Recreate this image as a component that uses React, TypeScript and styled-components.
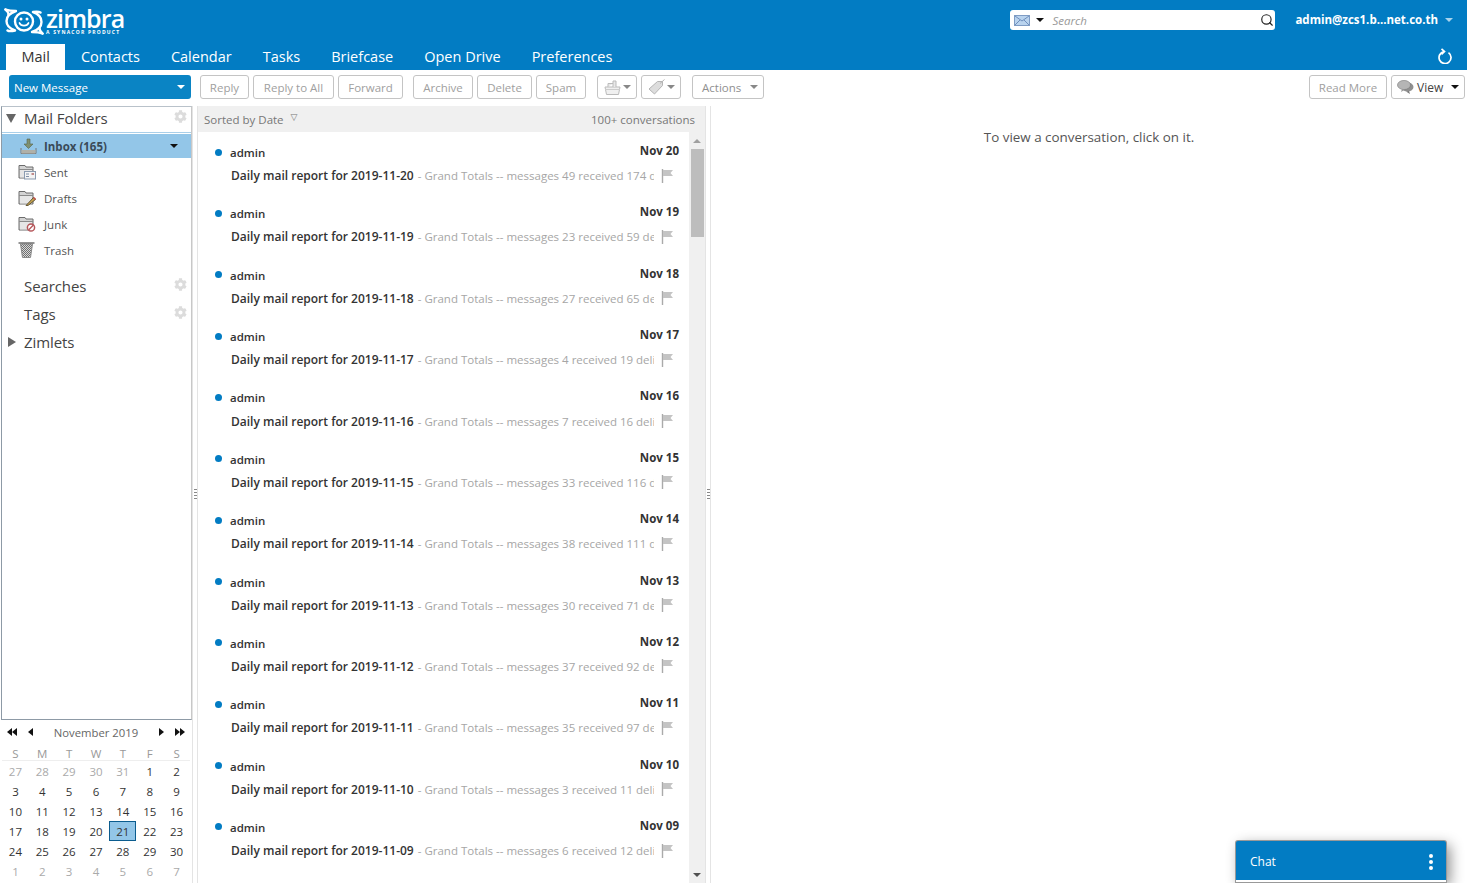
import styled, { createGlobalStyle } from 'styled-components'
import { FaCog } from 'react-icons/fa'
import { Search } from 'lucide-react'

const FONT = `"Open Sans", "Noto Sans", "Liberation Sans", sans-serif`

const GlobalStyle = createGlobalStyle`
  html, body {
    margin: 0;
    padding: 0;
    height: 100%;
    overflow: hidden;
    background: #fff;
  }
  * {
    box-sizing: border-box;
  }
  body {
    font-family: ${FONT};
    font-size: 12px;
    color: #333;
  }
`

const tabs = ['Mail', 'Contacts', 'Calendar', 'Tasks', 'Briefcase', 'Open Drive', 'Preferences']

const messages = [
  { day: '20', count: '49', rest: 'received 174 delivered' },
  { day: '19', count: '23', rest: 'received 59 delivered' },
  { day: '18', count: '27', rest: 'received 65 delivered' },
  { day: '17', count: '4', rest: 'received 19 delivered' },
  { day: '16', count: '7', rest: 'received 16 delivered' },
  { day: '15', count: '33', rest: 'received 116 delivered' },
  { day: '14', count: '38', rest: 'received 111 delivered' },
  { day: '13', count: '30', rest: 'received 71 delivered' },
  { day: '12', count: '37', rest: 'received 92 delivered' },
  { day: '11', count: '35', rest: 'received 97 delivered' },
  { day: '10', count: '3', rest: 'received 11 delivered' },
  { day: '09', count: '6', rest: 'received 12 delivered' },
]

const weeks = [
  ['27', '28', '29', '30', '31', '1', '2'],
  ['3', '4', '5', '6', '7', '8', '9'],
  ['10', '11', '12', '13', '14', '15', '16'],
  ['17', '18', '19', '20', '21', '22', '23'],
  ['24', '25', '26', '27', '28', '29', '30'],
  ['1', '2', '3', '4', '5', '6', '7'],
]

function LogoMark() {
  return (
    <svg width="40" height="27" viewBox="0 0 40 27" fill="none" stroke="#fff" strokeLinecap="round" strokeLinejoin="round">
      <path d="M1.5 1.5 C5 2.8 8.5 3 12 3 C6 5 2.5 8.5 2.5 13 C2.5 17 5.5 20.5 11 22.5 C7 23.5 5 23.5 3.5 22.5" strokeWidth="2.4" />
      <path d="M1.5 1.5 C3.5 3 4.5 4.5 4.5 7" strokeWidth="2.4" />
      <path d="M38.5 25.5 C35 24.2 31.5 24 28 24 C34 22 37.5 18.5 37.5 14 C37.5 10 34.5 6 29 4 C33 3.5 35 3.5 36.5 4.5" strokeWidth="2.4" />
      <path d="M38.5 25.5 C36.5 24 35.5 22.5 35.5 20" strokeWidth="2.4" />
      <circle cx="20" cy="13.5" r="9" strokeWidth="2.4" />
      <circle cx="17" cy="11" r="1.5" fill="#fff" stroke="none" />
      <circle cx="23" cy="11" r="1.5" fill="#fff" stroke="none" />
      <path d="M15.5 15 C17 18.5 23 18.5 24.5 15" strokeWidth="1.8" />
    </svg>
  )
}

function Envelope() {
  return (
    <svg width="16" height="11" viewBox="0 0 16 11">
      <rect x="0.5" y="0.5" width="15" height="10" fill="#b9d3ee" stroke="#7f9cc4" />
      <path d="M1 1 L8 6 L15 1 M1 10 L6 5 M15 10 L10 5" fill="none" stroke="#6f8fbc" />
    </svg>
  )
}

function RefreshIcon() {
  return (
    <svg width="16" height="16" viewBox="0 0 16 16" fill="none" stroke="#fff" strokeWidth="1.7">
      <path d="M11.5 4.6 A6 6 0 1 1 7 3.6" />
      <path d="M4.5 0.8 L7.5 3.5 L4.5 6.4" />
    </svg>
  )
}

function InboxIcon() {
  return (
    <svg width="17" height="17" viewBox="0 0 17 17">
      <path d="M7 1 H10 V6 H13 L8.5 10.5 L4 6 H7 Z" fill="#7f9070" stroke="#55634c" strokeWidth="0.6" />
      <path d="M1 10 V15.5 H16 V10" fill="none" stroke="#777" strokeWidth="1" />
      <rect x="1.5" y="12" width="14" height="3.5" fill="#b0b0a8" />
    </svg>
  )
}

type FolderKind = 'sent' | 'drafts' | 'junk'

function FolderIcon({ kind }: { kind: FolderKind }) {
  return (
    <svg width="18" height="16" viewBox="0 0 18 16">
      <path d="M1 1.5 H7 L8 3 H15 V14 H1 Z" fill="#d4d4d4" stroke="#6c6c6c" />
      <path d="M1 5.5 H15" stroke="#8a8a8a" />
      <rect x="2" y="6" width="12" height="7.5" fill="#e6e6e6" />
      {kind === 'sent' && (
        <>
          <rect x="6.5" y="7.5" width="11" height="7.5" fill="#f4f4f4" stroke="#8a9bb0" />
          <path d="M8 10 H11 M8 12.5 H11" stroke="#7f90a8" />
          <rect x="13.5" y="9" width="2.5" height="2" fill="#c08a8a" />
        </>
      )}
      {kind === 'drafts' && (
        <>
          <path d="M8 15.5 L15.5 7.5 L17.5 9.5 L10 15.5 Z" fill="#c4a24f" stroke="#4a3d20" strokeWidth="0.8" />
          <path d="M15.5 7.5 L17.5 9.5" stroke="#c0504d" strokeWidth="1.6" />
        </>
      )}
      {kind === 'junk' && (
        <>
          <circle cx="13" cy="11.5" r="3.6" fill="#fff" stroke="#b5565a" strokeWidth="1.5" />
          <path d="M10.6 14 L15.4 9" stroke="#b5565a" strokeWidth="1.3" />
        </>
      )}
    </svg>
  )
}

function TrashIcon() {
  return (
    <svg width="18" height="16" viewBox="0 0 18 16">
      <defs>
        <pattern id="mesh" width="2" height="2" patternUnits="userSpaceOnUse">
          <rect width="2" height="2" fill="#d8d8d8" />
          <rect width="1" height="1" fill="#707070" />
          <rect x="1" y="1" width="1" height="1" fill="#707070" />
        </pattern>
      </defs>
      <path d="M2.5 2 H14.5 L12.5 15.5 H4.5 Z" fill="url(#mesh)" stroke="#8a8a8a" />
      <path d="M0.5 1 H16.5" stroke="#666" strokeWidth="1.4" />
    </svg>
  )
}

function PrintIcon() {
  return (
    <svg width="17" height="15" viewBox="0 0 17 15">
      <path d="M1 7 H16 L14.5 14.5 H2.5 Z" fill="#f0f0f0" stroke="#bbb" />
      <path d="M9 7 V1 H12 V7 M4 7 V3.5 H9" fill="#e8e8e8" stroke="#bbb" />
      <path d="M1 9.5 H16" stroke="#ccc" />
    </svg>
  )
}

function TagIcon() {
  return (
    <svg width="17" height="16" viewBox="0 0 17 16">
      <path d="M1 10 L9.5 2.5 L14.5 2.5 L14.5 6.5 L6.5 15 Z" fill="#ddd" stroke="#b4b4b4" />
      <path d="M16.5 0.5 L12 4.5" stroke="#b4b4b4" />
    </svg>
  )
}

function FlagIcon() {
  return (
    <svg width="13" height="14" viewBox="0 0 13 14">
      <path d="M1.5 0 V14" stroke="#aaa" strokeWidth="1.4" />
      <path d="M2 1 H12 L9.5 4 L12 7 H2 Z" fill="#c4c4c4" />
    </svg>
  )
}

function BubblesIcon() {
  return (
    <svg width="17" height="15" viewBox="0 0 17 15">
      <ellipse cx="10.5" cy="7" rx="6" ry="4.5" fill="#8f8f8f" />
      <ellipse cx="7" cy="5" rx="6.5" ry="4.6" fill="#b5b5b5" stroke="#777" strokeWidth="0.6" />
      <path d="M5 9 L4 12 L8 9.4 Z" fill="#999" />
      <path d="M12 11 L13 14 L9 11.4 Z" fill="#777" />
    </svg>
  )
}

export default function App() {
  return (
    <Page>
      <GlobalStyle />
      <Header>
        <TopRow>
          <Logo>
            <LogoMark />
            <LogoText>
              <LogoName>zimbra</LogoName>
              <LogoSub>A SYNACOR PRODUCT</LogoSub>
            </LogoText>
          </Logo>
          <SearchBox>
            <Envelope />
            <BlackCaret />
            <SearchLabel>Search</SearchLabel>
            <Search size={14} color="#222" strokeWidth={2} />
          </SearchBox>
          <UserName>admin@zcs1.b...net.co.th</UserName>
          <PaleCaret />
        </TopRow>
        <TabRow>
          {tabs.map((tab) => (
            <Tab key={tab} active={tab === 'Mail'}>
              {tab}
            </Tab>
          ))}
          <Refresh>
            <RefreshIcon />
          </Refresh>
        </TabRow>
      </Header>

      <Toolbar>
        <NewMessage>
          New Message
          <WhiteCaret />
        </NewMessage>
        <ButtonGroup after={10}>
          <ToolButton width={49}>Reply</ToolButton>
          <ToolButton width={81}>Reply to All</ToolButton>
          <ToolButton width={65}>Forward</ToolButton>
        </ButtonGroup>
        <ButtonGroup after={11}>
          <ToolButton width={60}>Archive</ToolButton>
          <ToolButton width={55}>Delete</ToolButton>
          <ToolButton width={50}>Spam</ToolButton>
        </ButtonGroup>
        <ButtonGroup after={11}>
          <IconButton width={40}>
            <PrintIcon />
            <GreyCaret />
          </IconButton>
          <IconButton width={40}>
            <TagIcon />
            <GreyCaret />
          </IconButton>
        </ButtonGroup>
        <ActionsButton width={72}>
          Actions
          <GreyCaret />
        </ActionsButton>
        <RightTools>
          <ToolButton width={78}>Read More</ToolButton>
          <ViewButton width={74}>
            <BubblesIcon />
            <ViewLabel>View</ViewLabel>
            <BlackCaret />
          </ViewButton>
        </RightTools>
      </Toolbar>

      <Main>
        <LeftColumn>
          <TreePanel>
            <OverviewHeader>
              <DownTriangle />
              <HeaderLabel>Mail Folders</HeaderLabel>
              <Gear>
                <FaCog size={13} />
              </Gear>
            </OverviewHeader>
            <InboxRow>
              <InboxIcon />
              <InboxLabel>Inbox (165)</InboxLabel>
              <BlackCaret />
            </InboxRow>
            <FolderRow>
              <FolderIcon kind="sent" />
              Sent
            </FolderRow>
            <FolderRow>
              <FolderIcon kind="drafts" />
              Drafts
            </FolderRow>
            <FolderRow>
              <FolderIcon kind="junk" />
              Junk
            </FolderRow>
            <FolderRow>
              <TrashIcon />
              Trash
            </FolderRow>
            <SectionGap />
            <SectionRow>
              <HeaderLabel>Searches</HeaderLabel>
              <SectionGear>
                <FaCog size={13} />
              </SectionGear>
            </SectionRow>
            <SectionRow>
              <HeaderLabel>Tags</HeaderLabel>
              <SectionGear>
                <FaCog size={13} />
              </SectionGear>
            </SectionRow>
            <ZimletRow>
              <RightTriangle />
              <HeaderLabel>Zimlets</HeaderLabel>
            </ZimletRow>
          </TreePanel>
          <Calendar>
            <CalendarTitle>
              <CalNav>
                <DoubleArrow>
                  <BackArrow />
                  <BackArrow />
                </DoubleArrow>
                <BackArrow />
              </CalNav>
              <MonthName>November 2019</MonthName>
              <CalNav>
                <NextArrow />
                <DoubleArrow>
                  <NextArrow />
                  <NextArrow />
                </DoubleArrow>
              </CalNav>
            </CalendarTitle>
            <WeekHeader>
              {['S', 'M', 'T', 'W', 'T', 'F', 'S'].map((d, i) => (
                <WeekDay key={i}>{d}</WeekDay>
              ))}
            </WeekHeader>
            <DayGrid>
              {weeks.map((week, w) =>
                week.map((d, i) => {
                  const outside = (w === 0 && i < 5) || w === 5
                  return (
                    <Day key={`${w}-${i}`} outside={outside} today={w === 3 && i === 4}>
                      {d}
                    </Day>
                  )
                }),
              )}
            </DayGrid>
          </Calendar>
        </LeftColumn>
        <Sash>
          <Grip />
        </Sash>

        <ListColumn>
          <ListHeader>
            <SortLabel>
              Sorted by Date
              <SortArrow>▽</SortArrow>
            </SortLabel>
            <span>100+ conversations</span>
          </ListHeader>
          <ListBody>
            <Messages>
              {messages.map((m) => (
                <Message key={m.day}>
                  <MessageTop>
                    <Dot />
                    <Sender>admin</Sender>
                    <DateText>Nov {m.day}</DateText>
                  </MessageTop>
                  <MessageBottom>
                    <SubjectLine>
                      <Subject>Daily mail report for 2019-11-{m.day}</Subject>
                      <Fragment>
                        {' '}
                        - Grand Totals -- messages {m.count} {m.rest}
                      </Fragment>
                    </SubjectLine>
                    <FlagIcon />
                  </MessageBottom>
                </Message>
              ))}
            </Messages>
            <Scrollbar>
              <ScrollUp />
              <ScrollThumb />
              <ScrollDown />
            </Scrollbar>
          </ListBody>
        </ListColumn>
        <Sash>
          <Grip />
        </Sash>

        <ReadingPane>To view a conversation, click on it.</ReadingPane>
      </Main>

      <ChatDock>
        Chat
        <ChatDots>
          <i />
          <i />
          <i />
        </ChatDots>
      </ChatDock>
    </Page>
  )
}

const Page = styled.div`
  position: relative;
  width: 100%;
  height: 100vh;
  display: flex;
  flex-direction: column;
  overflow: hidden;
`

const Header = styled.header`
  height: 70px;
  flex: none;
  background: #027cc3;
  display: flex;
  flex-direction: column;
`

const TopRow = styled.div`
  height: 44px;
  display: flex;
  align-items: flex-start;
  padding: 0 14px 0 4px;
`

const Logo = styled.div`
  display: flex;
  align-items: flex-start;
  gap: 2px;
  margin-top: 8px;
  color: #fff;
  margin-right: auto;
`

const LogoText = styled.div`
  display: flex;
  flex-direction: column;
  align-items: flex-start;
`

const LogoName = styled.span`
  font-size: 25px;
  line-height: 21px;
  letter-spacing: -0.9px;
  font-weight: 600;
`

const LogoSub = styled.span`
  font-size: 5px;
  line-height: 7px;
  font-weight: 700;
  letter-spacing: 1.2px;
  white-space: nowrap;
`

const SearchBox = styled.div`
  width: 265px;
  height: 20px;
  margin-top: 10px;
  margin-right: 20px;
  padding: 0 1px 0 4px;
  background: #fff;
  border-radius: 3px;
  display: flex;
  align-items: center;
  gap: 6px;
`

const SearchLabel = styled.span`
  flex: 1;
  margin-left: 2px;
  font-size: 11.5px;
  font-style: italic;
  color: #999;
`

const UserName = styled.span`
  margin-top: 11px;
  font-size: 11.5px;
  line-height: 17px;
  font-weight: 700;
  color: #fff;
  white-space: nowrap;
`

const Caret = styled.span`
  display: inline-block;
  width: 0;
  height: 0;
  flex: none;
  border-left: 4px solid transparent;
  border-right: 4px solid transparent;
`

const BlackCaret = styled(Caret)`
  border-top: 4px solid #111;
`

const WhiteCaret = styled(Caret)`
  border-top: 4px solid #fff;
`

const GreyCaret = styled(Caret)`
  border-top: 4px solid #888;
`

const PaleCaret = styled(Caret)`
  margin: 18px 0 0 7px;
  border-top: 4px solid #a9d3ec;
`

const TabRow = styled.nav`
  height: 26px;
  display: flex;
  align-items: stretch;
  padding: 0 14px 0 6px;
`

const Tab = styled.div<{ active?: boolean }>`
  padding: 1px 15.5px 0;
  font-size: 14.5px;
  line-height: 24px;
  white-space: nowrap;
  color: ${(props) => (props.active ? '#333' : '#fff')};
  background: ${(props) => (props.active ? '#fff' : 'transparent')};
`

const Refresh = styled.div`
  margin-left: auto;
  display: flex;
  align-items: center;
  padding-bottom: 2px;
`

const Toolbar = styled.div`
  height: 36px;
  flex: none;
  display: flex;
  align-items: flex-start;
  padding: 5px 2px 0 9px;
`

const NewMessage = styled.div`
  width: 182px;
  height: 24px;
  margin-right: 9px;
  padding: 0 6px 0 5px;
  display: flex;
  align-items: center;
  justify-content: space-between;
  background: #0a84c4;
  border-radius: 3px;
  color: #fff;
  font-size: 11.5px;
`

const ButtonGroup = styled.div<{ after: number }>`
  display: flex;
  gap: 4px;
  margin-right: ${(props) => props.after}px;
`

const ToolButton = styled.div<{ width: number }>`
  width: ${(props) => props.width}px;
  height: 24px;
  display: flex;
  align-items: center;
  justify-content: center;
  background: #fff;
  border: 1px solid #c4c4c4;
  border-radius: 3px;
  color: #a0a0a0;
  font-size: 11.5px;
  white-space: nowrap;
`

const IconButton = styled(ToolButton)`
  padding: 0 5px 0 6px;
  justify-content: space-between;
`

const ActionsButton = styled(ToolButton)`
  justify-content: space-between;
  padding: 0 5px 0 9px;
  color: #909090;
`

const RightTools = styled.div`
  margin-left: auto;
  display: flex;
  gap: 4px;
`

const ViewButton = styled(ToolButton)`
  padding: 0 5px;
  color: #444;
  justify-content: flex-start;
`

const ViewLabel = styled.span`
  flex: 1;
  margin-left: 3px;
  font-size: 12px;
`

const Main = styled.div`
  flex: 1;
  min-height: 0;
  display: flex;
`

const LeftColumn = styled.aside`
  width: 192px;
  flex: none;
  display: flex;
  flex-direction: column;
  padding-left: 1px;
`

const TreePanel = styled.div`
  height: 614px;
  flex: none;
  border: 1px solid #8d9aa6;
  border-top-color: #b9c2ca;
  border-right-color: #c8c8c8;
  background: #fff;
`

const OverviewHeader = styled.div`
  position: relative;
  height: 26px;
  padding: 0 0 3px 4px;
  display: flex;
  align-items: center;
  gap: 8px;
  border-bottom: 1px solid #a9cfe9;
`

const HeaderLabel = styled.span`
  font-size: 15px;
  color: #444;
  letter-spacing: -0.1px;
`

const DownTriangle = styled.span`
  width: 0;
  height: 0;
  border-left: 5px solid transparent;
  border-right: 5px solid transparent;
  border-top: 9px solid #666;
`

const RightTriangle = styled.span`
  width: 0;
  height: 0;
  border-top: 5px solid transparent;
  border-bottom: 5px solid transparent;
  border-left: 8px solid #666;
`

const Gear = styled.span`
  position: absolute;
  right: 4px;
  top: 3px;
  color: #dcdcdc;
  line-height: 0;
`

const SectionGear = styled(Gear)`
  top: 6px;
`

const InboxRow = styled.div`
  height: 24px;
  margin: 1px 0;
  padding: 0 13px 0 18px;
  display: flex;
  align-items: center;
  background: #93c6e8;
`

const InboxLabel = styled.span`
  flex: 1;
  margin-left: 7px;
  font-size: 11.5px;
  font-weight: 700;
  color: #3a4a58;
`

const FolderRow = styled.div`
  height: 26px;
  padding-left: 16px;
  display: flex;
  align-items: center;
  gap: 8px;
  font-size: 11.5px;
  color: #555;
`

const SectionGap = styled.div`
  height: 9px;
`

const SectionRow = styled.div`
  position: relative;
  height: 28px;
  padding-left: 22px;
  display: flex;
  align-items: center;
`

const ZimletRow = styled.div`
  height: 28px;
  padding-left: 6px;
  display: flex;
  align-items: center;
  gap: 8px;
`

const Calendar = styled.div`
  flex: 1;
  padding: 3px 2px 0 1px;
  font-size: 12px;
`

const CalendarTitle = styled.div`
  height: 18px;
  padding: 0 5px 0 5px;
  display: flex;
  align-items: center;
  justify-content: space-between;
`

const CalNav = styled.div`
  width: 26px;
  display: flex;
  justify-content: space-between;
  align-items: center;
`

const DoubleArrow = styled.span`
  display: flex;
  gap: 0;
`

const BackArrow = styled.span`
  width: 0;
  height: 0;
  border-top: 4px solid transparent;
  border-bottom: 4px solid transparent;
  border-right: 5px solid #111;
`

const NextArrow = styled.span`
  width: 0;
  height: 0;
  border-top: 4px solid transparent;
  border-bottom: 4px solid transparent;
  border-left: 5px solid #111;
`

const MonthName = styled.span`
  color: #666;
  font-size: 11.3px;
`

const WeekHeader = styled.div`
  display: grid;
  grid-template-columns: repeat(7, 1fr);
  height: 17px;
  border-bottom: 1px solid #eee;
  margin-top: 3px;
`

const WeekDay = styled.span`
  text-align: center;
  line-height: 19px;
  color: #999;
  font-size: 11.5px;
`

const DayGrid = styled.div`
  display: grid;
  grid-template-columns: repeat(7, 1fr);
  grid-auto-rows: 20px;
`

const Day = styled.span<{ outside?: boolean; today?: boolean }>`
  text-align: center;
  line-height: 19px;
  font-size: 11.5px;
  color: ${(props) => (props.outside ? '#aaa' : '#333')};
  background: ${(props) => (props.today ? '#93c6e8' : 'transparent')};
  border: ${(props) => (props.today ? '1px solid #0b5c8e' : '1px solid transparent')};
`

const Sash = styled.div`
  width: 6px;
  flex: none;
  display: flex;
  align-items: center;
  justify-content: center;
  border-left: 1px solid #e4e4e4;
  border-right: 1px solid #e4e4e4;
`

const Grip = styled.div`
  width: 3px;
  height: 12px;
  background: repeating-linear-gradient(to bottom, #888 0 1px, transparent 1px 3px);
`

const ListColumn = styled.section`
  width: 507px;
  flex: none;
  display: flex;
  flex-direction: column;
  min-height: 0;
`

const ListHeader = styled.div`
  height: 26px;
  flex: none;
  padding: 0 10px 0 6px;
  display: flex;
  align-items: center;
  justify-content: space-between;
  background: #f0f0f0;
  color: #777;
  font-size: 11.5px;
`

const SortLabel = styled.span`
  display: flex;
  align-items: center;
  gap: 7px;
`

const SortArrow = styled.span`
  font-family: "DejaVu Sans", sans-serif;
  font-size: 9px;
  line-height: 9px;
  margin-top: -3px;
`

const ListBody = styled.div`
  flex: 1;
  min-height: 0;
  display: flex;
`

const Messages = styled.div`
  flex: 1;
  min-width: 0;
  overflow: hidden;
  padding-left: 17px;
`

const Message = styled.div`
  height: 61.36px;
  padding-top: 9px;
`

const MessageTop = styled.div`
  height: 22px;
  display: flex;
  align-items: center;
  padding-right: 10px;
`

const Dot = styled.span`
  width: 7px;
  height: 7px;
  margin-right: 8px;
  border-radius: 50%;
  background: #027cc3;
  flex: none;
`

const Sender = styled.span`
  flex: 1;
  font-size: 11.5px;
  font-weight: 600;
  color: #333;
  padding-top: 1px;
`

const DateText = styled.span`
  font-size: 11.5px;
  font-weight: 700;
  color: #333;
  margin-top: -3px;
`

const MessageBottom = styled.div`
  height: 22px;
  margin-top: 1.6px;
  padding-left: 16px;
  display: flex;
  align-items: center;
  gap: 7px;
`

const SubjectLine = styled.div`
  width: 423px;
  overflow: hidden;
  white-space: pre;
  font-size: 11.5px;
`

const Subject = styled.span`
  font-size: 12px;
  font-weight: 600;
  color: #333;
`

const Fragment = styled.span`
  padding-left: 1px;
  color: #a6a6a6;
`

const Scrollbar = styled.div`
  width: 16px;
  flex: none;
  display: flex;
  flex-direction: column;
  align-items: center;
  background: #f0f0f0;
  padding: 7px 0 6px;
`

const ScrollUp = styled.span`
  width: 0;
  height: 0;
  border-left: 4px solid transparent;
  border-right: 4px solid transparent;
  border-bottom: 4px solid #a0a0a0;
`

const ScrollThumb = styled.div`
  width: 13px;
  height: 88px;
  margin-top: 6px;
  margin-bottom: auto;
  background: #bdbdbd;
`

const ScrollDown = styled.span`
  width: 0;
  height: 0;
  border-left: 4px solid transparent;
  border-right: 4px solid transparent;
  border-top: 4px solid #505050;
`

const ReadingPane = styled.section`
  flex: 1;
  padding-top: 22px;
  text-align: center;
  font-size: 13.4px;
  line-height: 18px;
  color: #555;
`

const ChatDock = styled.div`
  position: absolute;
  left: 1236px;
  bottom: 1px;
  width: 210px;
  height: 41px;
  padding: 2px 13px 0 14px;
  display: flex;
  align-items: center;
  justify-content: space-between;
  background: #027cc3;
  border-radius: 2px 2px 0 0;
  border-bottom: 2px solid #fff;
  box-shadow: 0 0 0 1px #999, 4px 4px 14px rgba(0, 0, 0, 0.45);
  color: #fff;
  font-size: 12px;
`

const ChatDots = styled.span`
  display: flex;
  flex-direction: column;
  gap: 2px;
  i {
    width: 4px;
    height: 4px;
    border-radius: 50%;
    background: #fff;
  }
`
